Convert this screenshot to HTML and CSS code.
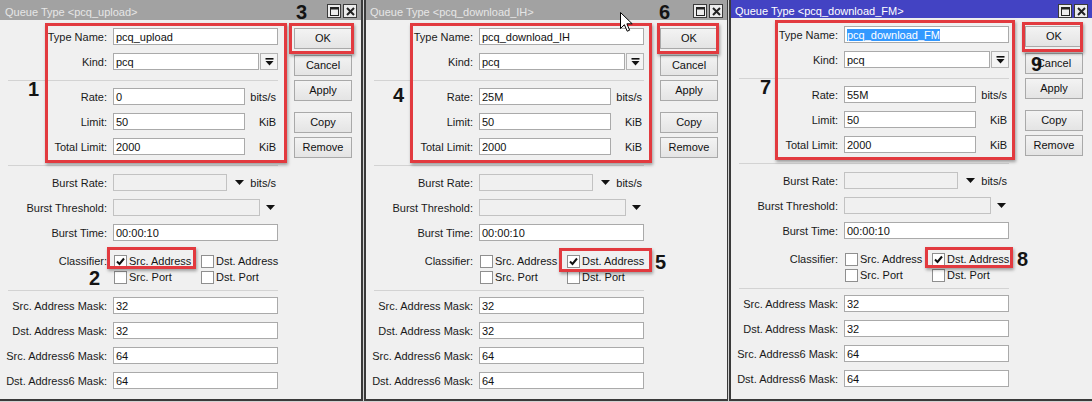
FILE: index.html
```html
<!DOCTYPE html>
<html>
<head>
<meta charset="utf-8">
<title>Queue Types</title>
<link rel="stylesheet" href="styles.css">
</head>
<body>
<div class="desk">

  <!-- Window 1 -->
  <div class="win w1">
    <div class="title">
      <span class="ttext">Queue Type &lt;pcq_upload&gt;</span>
      <div class="tbtns">
        <span class="tb"><svg width="11" height="11" viewBox="0 0 11 11"><rect x="1.5" y="1.5" width="8" height="8" fill="none" stroke="#222"/><rect x="1" y="1" width="9" height="2.5" fill="#222"/></svg></span>
        <span class="tb"><svg width="11" height="11" viewBox="0 0 11 11"><path d="M2 2L9 9M9 2L2 9" stroke="#222" stroke-width="2"/></svg></span>
      </div>
    </div>
    <div class="body">
      <div class="form">
        <div class="row"><span class="lbl">Type Name:</span><div class="inp">pcq_upload</div></div>
        <div class="row"><span class="lbl">Kind:</span><div class="combo"><div class="inp">pcq</div><span class="ddbtn"><svg width="9" height="8" viewBox="0 0 9 8"><rect x="0.5" y="0" width="8" height="1.6" fill="#111"/><path d="M0.5 3H8.5L4.5 7.5Z" fill="#111"/></svg></span></div></div>
        <div class="sep sep1"></div>
        <div class="row"><span class="lbl">Rate:</span><div class="unitf"><div class="inp">0</div><span class="unit">bits/s</span></div></div>
        <div class="row"><span class="lbl">Limit:</span><div class="unitf"><div class="inp">50</div><span class="unit">KiB</span></div></div>
        <div class="row"><span class="lbl">Total Limit:</span><div class="unitf"><div class="inp">2000</div><span class="unit">KiB</span></div></div>
        <div class="sep sep2"></div>
        <div class="row"><span class="lbl">Burst Rate:</span><div class="burstf"><div class="inp dis"></div><span class="arr"><svg width="9" height="5" viewBox="0 0 9 5"><path d="M0 0H9L4.5 5Z" fill="#111"/></svg></span><span class="unit">bits/s</span></div></div>
        <div class="row"><span class="lbl">Burst Threshold:</span><div class="threshf"><div class="inp dis"></div><span class="arr"><svg width="9" height="5" viewBox="0 0 9 5"><path d="M0 0H9L4.5 5Z" fill="#111"/></svg></span></div></div>
        <div class="row"><span class="lbl">Burst Time:</span><div class="inp">00:00:10</div></div>
        <div class="classif">
          <span class="lbl">Classifier:</span>
          <div class="cbgrid">
            <span class="cb"><span class="box"><svg width="11" height="11" viewBox="0 0 11 11"><path d="M2 5.5L4.5 8L9 2.5" fill="none" stroke="#111" stroke-width="2"/></svg></span>Src. Address</span>
            <span class="cb"><span class="box"></span>Dst. Address</span>
            <span class="cb"><span class="box"></span>Src. Port</span>
            <span class="cb"><span class="box"></span>Dst. Port</span>
          </div>
        </div>
        <div class="sep sep3"></div>
        <div class="row"><span class="lbl">Src. Address Mask:</span><div class="inp">32</div></div>
        <div class="row"><span class="lbl">Dst. Address Mask:</span><div class="inp">32</div></div>
        <div class="row"><span class="lbl">Src. Address6 Mask:</span><div class="inp">64</div></div>
        <div class="row"><span class="lbl">Dst. Address6 Mask:</span><div class="inp">64</div></div>
      </div>
      <div class="btns">
        <span class="btn b-ok">OK</span>
        <span class="btn b-cancel">Cancel</span>
        <span class="btn b-apply">Apply</span>
        <span class="btn b-copy">Copy</span>
        <span class="btn b-remove">Remove</span>
      </div>
      <div class="rb w1-main"></div>
      <div class="rb w1-ok"></div>
      <div class="rb w1-cls"></div>
      <span class="num w1-n1">1</span>
      <span class="num w1-n2">2</span>
      <span class="num w1-n3">3</span>
    </div>
  </div>

  <!-- Window 2 -->
  <div class="win w2">
    <div class="title">
      <span class="ttext">Queue Type &lt;pcq_download_IH&gt;</span>
      <div class="tbtns">
        <span class="tb"><svg width="11" height="11" viewBox="0 0 11 11"><rect x="1.5" y="1.5" width="8" height="8" fill="none" stroke="#222"/><rect x="1" y="1" width="9" height="2.5" fill="#222"/></svg></span>
        <span class="tb"><svg width="11" height="11" viewBox="0 0 11 11"><path d="M2 2L9 9M9 2L2 9" stroke="#222" stroke-width="2"/></svg></span>
      </div>
    </div>
    <div class="body">
      <div class="form">
        <div class="row"><span class="lbl">Type Name:</span><div class="inp">pcq_download_IH</div></div>
        <div class="row"><span class="lbl">Kind:</span><div class="combo"><div class="inp">pcq</div><span class="ddbtn"><svg width="9" height="8" viewBox="0 0 9 8"><rect x="0.5" y="0" width="8" height="1.6" fill="#111"/><path d="M0.5 3H8.5L4.5 7.5Z" fill="#111"/></svg></span></div></div>
        <div class="sep sep1"></div>
        <div class="row"><span class="lbl">Rate:</span><div class="unitf"><div class="inp">25M</div><span class="unit">bits/s</span></div></div>
        <div class="row"><span class="lbl">Limit:</span><div class="unitf"><div class="inp">50</div><span class="unit">KiB</span></div></div>
        <div class="row"><span class="lbl">Total Limit:</span><div class="unitf"><div class="inp">2000</div><span class="unit">KiB</span></div></div>
        <div class="sep sep2"></div>
        <div class="row"><span class="lbl">Burst Rate:</span><div class="burstf"><div class="inp dis"></div><span class="arr"><svg width="9" height="5" viewBox="0 0 9 5"><path d="M0 0H9L4.5 5Z" fill="#111"/></svg></span><span class="unit">bits/s</span></div></div>
        <div class="row"><span class="lbl">Burst Threshold:</span><div class="threshf"><div class="inp dis"></div><span class="arr"><svg width="9" height="5" viewBox="0 0 9 5"><path d="M0 0H9L4.5 5Z" fill="#111"/></svg></span></div></div>
        <div class="row"><span class="lbl">Burst Time:</span><div class="inp">00:00:10</div></div>
        <div class="classif">
          <span class="lbl">Classifier:</span>
          <div class="cbgrid">
            <span class="cb"><span class="box"></span>Src. Address</span>
            <span class="cb"><span class="box"><svg width="11" height="11" viewBox="0 0 11 11"><path d="M2 5.5L4.5 8L9 2.5" fill="none" stroke="#111" stroke-width="2"/></svg></span>Dst. Address</span>
            <span class="cb"><span class="box"></span>Src. Port</span>
            <span class="cb"><span class="box"></span>Dst. Port</span>
          </div>
        </div>
        <div class="sep sep3"></div>
        <div class="row"><span class="lbl">Src. Address Mask:</span><div class="inp">32</div></div>
        <div class="row"><span class="lbl">Dst. Address Mask:</span><div class="inp">32</div></div>
        <div class="row"><span class="lbl">Src. Address6 Mask:</span><div class="inp">64</div></div>
        <div class="row"><span class="lbl">Dst. Address6 Mask:</span><div class="inp">64</div></div>
      </div>
      <div class="btns">
        <span class="btn b-ok">OK</span>
        <span class="btn b-cancel">Cancel</span>
        <span class="btn b-apply">Apply</span>
        <span class="btn b-copy">Copy</span>
        <span class="btn b-remove">Remove</span>
      </div>
      <div class="rb w2-main"></div>
      <div class="rb w2-ok"></div>
      <div class="rb w2-cls"></div>
      <span class="num w2-n4">4</span>
      <span class="num w2-n5">5</span>
      <span class="num w2-n6">6</span>
      <svg class="cursor" width="13" height="20" viewBox="0 0 13 20"><path d="M0.5 0.5V16.5L4.4 12.7L7.2 19.2L9.6 18.2L6.9 11.8H12.2Z" fill="#fff" stroke="#000" stroke-width="1" stroke-linejoin="round"/></svg>
    </div>
  </div>

  <!-- Window 3 -->
  <div class="win w3">
    <div class="title">
      <span class="ttext">Queue Type &lt;pcq_download_FM&gt;</span>
      <div class="tbtns">
        <span class="tb"><svg width="11" height="11" viewBox="0 0 11 11"><rect x="1.5" y="1.5" width="8" height="8" fill="none" stroke="#222"/><rect x="1" y="1" width="9" height="2.5" fill="#222"/></svg></span>
        <span class="tb"><svg width="11" height="11" viewBox="0 0 11 11"><path d="M2 2L9 9M9 2L2 9" stroke="#222" stroke-width="2"/></svg></span>
      </div>
    </div>
    <div class="body">
      <div class="form">
        <div class="row"><span class="lbl">Type Name:</span><div class="inp"><span class="sel">pcq_download_FM</span></div></div>
        <div class="row"><span class="lbl">Kind:</span><div class="combo"><div class="inp">pcq</div><span class="ddbtn"><svg width="9" height="8" viewBox="0 0 9 8"><rect x="0.5" y="0" width="8" height="1.6" fill="#111"/><path d="M0.5 3H8.5L4.5 7.5Z" fill="#111"/></svg></span></div></div>
        <div class="sep sep1"></div>
        <div class="row"><span class="lbl">Rate:</span><div class="unitf"><div class="inp">55M</div><span class="unit">bits/s</span></div></div>
        <div class="row"><span class="lbl">Limit:</span><div class="unitf"><div class="inp">50</div><span class="unit">KiB</span></div></div>
        <div class="row"><span class="lbl">Total Limit:</span><div class="unitf"><div class="inp">2000</div><span class="unit">KiB</span></div></div>
        <div class="sep sep2"></div>
        <div class="row"><span class="lbl">Burst Rate:</span><div class="burstf"><div class="inp dis"></div><span class="arr"><svg width="9" height="5" viewBox="0 0 9 5"><path d="M0 0H9L4.5 5Z" fill="#111"/></svg></span><span class="unit">bits/s</span></div></div>
        <div class="row"><span class="lbl">Burst Threshold:</span><div class="threshf"><div class="inp dis"></div><span class="arr"><svg width="9" height="5" viewBox="0 0 9 5"><path d="M0 0H9L4.5 5Z" fill="#111"/></svg></span></div></div>
        <div class="row"><span class="lbl">Burst Time:</span><div class="inp">00:00:10</div></div>
        <div class="classif">
          <span class="lbl">Classifier:</span>
          <div class="cbgrid">
            <span class="cb"><span class="box"></span>Src. Address</span>
            <span class="cb"><span class="box"><svg width="11" height="11" viewBox="0 0 11 11"><path d="M2 5.5L4.5 8L9 2.5" fill="none" stroke="#111" stroke-width="2"/></svg></span>Dst. Address</span>
            <span class="cb"><span class="box"></span>Src. Port</span>
            <span class="cb"><span class="box"></span>Dst. Port</span>
          </div>
        </div>
        <div class="sep sep3"></div>
        <div class="row"><span class="lbl">Src. Address Mask:</span><div class="inp">32</div></div>
        <div class="row"><span class="lbl">Dst. Address Mask:</span><div class="inp">32</div></div>
        <div class="row"><span class="lbl">Src. Address6 Mask:</span><div class="inp">64</div></div>
        <div class="row"><span class="lbl">Dst. Address6 Mask:</span><div class="inp">64</div></div>
      </div>
      <div class="btns">
        <span class="btn b-ok">OK</span>
        <span class="btn b-cancel">Cancel</span>
        <span class="btn b-apply">Apply</span>
        <span class="btn b-copy">Copy</span>
        <span class="btn b-remove">Remove</span>
      </div>
      <div class="rb w3-main"></div>
      <div class="rb w3-ok"></div>
      <div class="rb w3-cls"></div>
      <span class="num w3-n7">7</span>
      <span class="num w3-n8">8</span>
      <span class="num w3-n9">9</span>
    </div>
  </div>

</div>
</body>
</html>
```

FILE: styles.css
```css
* { box-sizing: border-box; }
html, body { margin: 0; padding: 0; }
body {
  width: 1092px;
  height: 402px;
  overflow: hidden;
  background: #d2d2d2;
  font-family: "Liberation Sans", Arial, sans-serif;
  font-size: 11px;
  color: #151515;
}
.desk { display: flex; height: 402px; align-items: flex-start; }

.win {
  flex: none;
  width: 365px;
  height: 401px;
  display: flex;
  flex-direction: column;
  background: #f0f0f0;
  border-left: 2px solid #3a3a3a;
  border-right: 2px solid #3a3a3a;
  border-bottom: 2px solid #3a3a3a;
  position: relative;
}
.w1 { margin-left: -2px; margin-right: 1px; }
.w2 { width: 364px; border-right-width: 1px; margin-right: 1px; }
.w3 { width: 365px; }

/* title bar */
.title {
  flex: none;
  height: 20px;
  background: #a2a2a2;
  color: #e6e6e6;
  display: flex;
  justify-content: space-between;
  align-items: flex-start;
  padding: 0 4px 0 4px;
}
.w1 .title { padding-left: 5px; }
.ttext { line-height: 12px; margin-top: 6px; white-space: nowrap; }
.w3 .title { height: 18px; background: #4343c3; color: #ffffff; }
.w3 .ttext { margin-top: 5px; }
.tbtns { display: flex; gap: 2px; margin-top: 4px; }
.tb {
  width: 14px;
  height: 14px;
  border: 1px solid #3a3a3a;
  background: #ececec;
  display: flex;
  align-items: center;
  justify-content: center;
}

/* body */
.body {
  flex: 1;
  position: relative;
  display: flex;
  align-items: flex-start;
  padding-top: 8px;
}
.form { width: 278px; flex: none; display: flow-root; }

.row {
  display: grid;
  grid-template-columns: 113px 165px;
  height: 17px;
  align-items: center;
  margin-bottom: 8px;
}
.lbl { text-align: right; padding-right: 6px; white-space: nowrap; color: #1a1a1a; }

.inp {
  height: 17px;
  border: 1px solid #aaaaaa;
  background: #ffffff;
  padding-left: 2px;
  line-height: 16px;
  white-space: nowrap;
  overflow: hidden;
  color: #111;
}
.inp.dis { background: #f0f0f0; border-color: #c2c2c2; }
.sel { background: #3399ff; color: #ffffff; }

.combo { display: grid; grid-template-columns: 146px 19px; gap: 0; }
.ddbtn {
  height: 17px;
  border: 1px solid #b4b4b4;
  background: #f4f4f4;
  display: flex;
  align-items: center;
  justify-content: center;
  margin-left: 1px;
}

.unitf { display: grid; grid-template-columns: 132px 33px; align-items: center; }
.burstf { display: grid; grid-template-columns: 114px 18px 33px; align-items: center; }
.threshf { display: grid; grid-template-columns: 147px 18px; align-items: center; }
.unit { text-align: right; padding-right: 2px; white-space: nowrap; }
.arr { display: flex; align-items: center; height: 17px; }
.burstf .arr { padding-left: 8px; }
.threshf .arr { padding-left: 6px; }

/* separators: vertical margins collapse with the rows' 8px bottom margin */
.sep {
  height: 1px;
  background: #d3d3d3;
  width: 270px;
  margin-left: 8px;
}
.sep1 { margin-top: 10px; margin-bottom: 7px; }
.sep2 { margin-top: 10px; margin-bottom: 8px; }
.sep3 { margin-top: 5px; margin-bottom: 6px; }

.classif {
  display: grid;
  grid-template-columns: 113px 174px;
  margin-top: 12px;
}
.classif .lbl { line-height: 16px; }
.cbgrid { display: grid; grid-template-columns: 87px 87px; grid-auto-rows: 16px; }
.cb { display: flex; align-items: center; gap: 2px; white-space: nowrap; }
.box {
  width: 13px;
  height: 13px;
  flex: none;
  margin-left: 1px;
  border: 1px solid #8f8f8f;
  background: #ffffff;
  display: flex;
  align-items: center;
  justify-content: center;
}

/* buttons */
.btns { width: 58px; margin-left: 16px; flex: none; display: flex; flex-direction: column; }
.btn {
  height: 21px;
  border: 1px solid #a9a9a9;
  background: linear-gradient(#f3f3f3, #e4e4e4);
  text-align: center;
  line-height: 19px;
  color: #111;
}
.b-cancel { margin-top: 6px; }
.b-apply { margin-top: 4px; }
.b-copy { margin-top: 11px; }
.b-remove { margin-top: 4px; }

/* annotations */
.rb {
  position: absolute;
  border: 3px solid #e23a3f;
  box-shadow: 1px 2px 3px rgba(0, 0, 0, 0.35);
}
.num {
  position: absolute;
  font-family: "Liberation Sans", Arial, sans-serif;
  font-weight: bold;
  font-size: 20px;
  line-height: 20px;
  color: #141414;
}
.cursor { position: absolute; left: 254px; top: -8px; }

.w1-main { left: 45px; top: 3px; width: 242px; height: 140px; }
.w1-ok { left: 289px; top: 3px; width: 65px; height: 31px; }
.w1-cls { left: 107px; top: 227px; width: 89px; height: 22px; }
.w1-n1 { left: 28px; top: 59px; }
.w1-n2 { left: 89px; top: 248px; }
.w1-n3 { left: 296px; top: -18px; }

.w2-main { left: 44px; top: 3px; width: 242px; height: 140px; }
.w2-ok { left: 291px; top: 3px; width: 62px; height: 31px; }
.w2-cls { left: 193px; top: 228px; width: 93px; height: 24px; }
.w2-n4 { left: 27px; top: 65px; }
.w2-n5 { left: 289px; top: 232px; }
.w2-n6 { left: 293px; top: -18px; }

.w3-main { left: 44px; top: 2px; width: 240px; height: 140px; }
.w3-ok { left: 291px; top: 4px; width: 61px; height: 30px; }
.w3-cls { left: 194px; top: 229px; width: 88px; height: 21px; }
.w3-n7 { left: 29px; top: 59px; }
.w3-n8 { left: 286px; top: 231px; }
.w3-n9 { left: 300px; top: 36px; }
```
